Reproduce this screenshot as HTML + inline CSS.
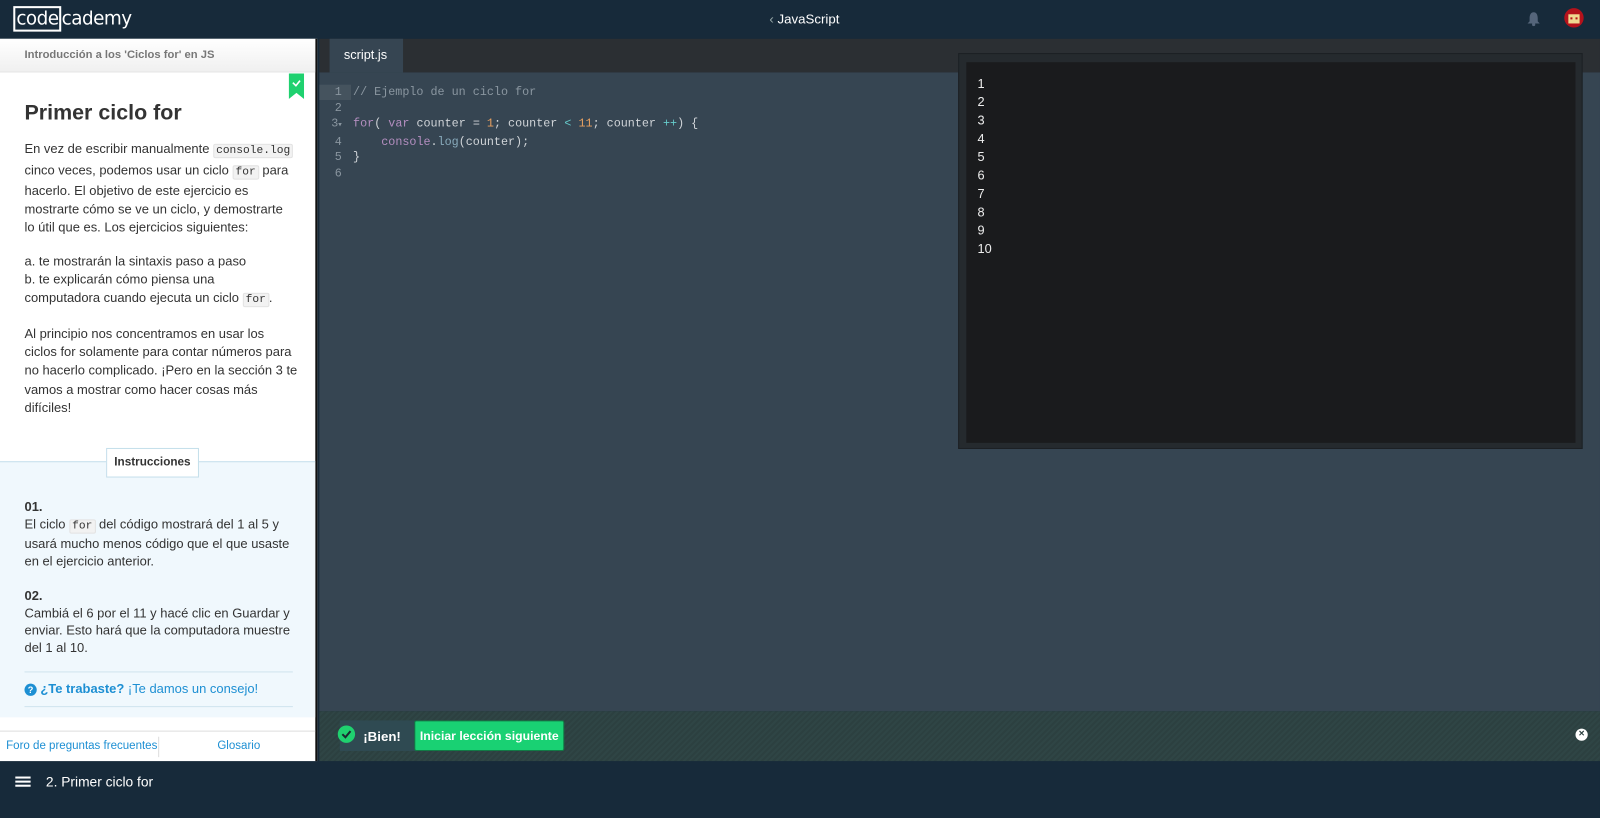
<!DOCTYPE html>
<html><head><meta charset="utf-8"><style>
*{margin:0;padding:0;box-sizing:border-box}
body{width:1600px;height:802px;overflow:hidden;background:#172a3a;font-family:"Liberation Sans","DejaVu Sans",sans-serif;position:relative}
#w{position:absolute;left:0;top:0;width:1568px;height:786px;transform:scale(1.0204);transform-origin:0 0}
.top{position:absolute;left:0;top:0;width:1568px;height:38px;background:#172a3a}
.logo{position:absolute;left:13px;top:8px;color:#fff;font-size:18px;font-family:"DejaVu Sans",sans-serif;letter-spacing:-0.5px}
.logo span.b{border:2px solid #fff;padding:0 1px}
.ttl{position:absolute;left:754px;top:11px;color:#fff;font-size:13px}
.left{position:absolute;left:0;top:38px;width:311px;height:708px;background:#fff;border-right:2px solid #111;overflow:hidden}
.lh{height:33px;background:linear-gradient(#fff,#f0f0f0);border-bottom:1px solid #e3e3e3;color:#777;font-size:11px;font-weight:bold;padding:10px 24px}
.lb{padding:0 10px 0 24px;color:#333;font-size:12.7px;line-height:18.3px;white-space:nowrap}
h1{font-size:21px;margin-top:31px;margin-bottom:17px;color:#333}
code{font-family:"Liberation Mono",monospace;font-size:11px;background:#f2f2f2;border:1px solid #e3e3e3;padding:0 2px;border-radius:2px}
p{margin-bottom:14px}
.ins{position:absolute;left:0;top:414px;width:309px;height:251px;background:#f0f8fd;border-top:1px solid #c5dfeb;padding:36px 22px 0 24px;font-size:12.7px;line-height:17px;color:#333}
.insb{position:absolute;left:104px;top:-14px;background:#fff;border:1px solid #c5dfeb;font-size:11.5px;font-weight:bold;padding:5px 7px;color:#333}
.foot{position:absolute;left:0;top:678px;width:309px;height:30px;border-top:1px solid #ddd;font-size:11.3px;color:#1d8fd3}
.tabbar{position:absolute;left:313px;top:38px;width:1255px;height:33px;background:#2b2f33}
.tab{position:absolute;left:10px;top:0;width:72px;height:33px;background:#364552;color:#fff;font-size:12.5px;padding:9px 0 0 14px}
.ed{position:absolute;left:313px;top:71px;width:1255px;height:626px;background:#364552}
.code{position:absolute;left:0;top:12px;font-family:"Liberation Mono",monospace;font-size:11.5px;line-height:15.5px;color:#d0d4d8;white-space:pre}
.ln{display:inline-block;width:33px;text-align:right;padding-right:11px;color:#8a96a0}
.out{position:absolute;left:939px;top:52px;width:612px;height:388px;background:#252a2e;border:1px solid #1c2024}
.outi{position:absolute;left:7px;top:8px;width:597px;height:373px;background:#1a1b1d;color:#eee;font-size:12.5px;line-height:18px;padding:12px 11px}
.fb{position:absolute;left:313px;top:697px;width:1255px;height:49px;background:repeating-linear-gradient(135deg,#2c4040 0 2px,#2f4545 2px 4px)}
.bot{position:absolute;left:0;top:746px;width:1568px;height:56px;background:#172a3a}
</style></head><body><div id="w">
<div class="top">
<div class="logo"><span class="b">code</span>cademy</div>
<div class="ttl"><span style="color:#9aa">‹</span> JavaScript</div>
<svg style="position:absolute;left:1496px;top:11px" width="14" height="15" viewBox="0 0 14 15"><path d="M7 1C4 1 3 4 3 7v3L1 12h12l-2-2V7c0-3-1-6-4-6z" fill="#55657a"/><circle cx="7" cy="13" r="1.6" fill="#55657a"/></svg>
<div style="position:absolute;left:1533px;top:8px;width:19px;height:19px;border-radius:50%;background:#b5121b;overflow:hidden"><div style="position:absolute;left:4px;top:6px;width:11px;height:9px;background:#f0d890"></div><div style="position:absolute;left:6px;top:9px;width:2px;height:2px;background:#b5121b"></div><div style="position:absolute;left:11px;top:9px;width:2px;height:2px;background:#b5121b"></div></div>
</div>
<div class="left">
<div class="lh">Introducción a los 'Ciclos for' en JS</div>
<svg style="position:absolute;left:283px;top:34px" width="15" height="25"><path d="M0 0h15v25l-7.5-6L0 25z" fill="#1fd16f"/><path d="M4 9l3 3 4-5" stroke="#fff" stroke-width="1.6" fill="none"/></svg>
<div class="lb">
<h1>Primer ciclo for</h1>
<p>En vez de escribir manualmente <code>console.log</code><br>cinco veces, podemos usar un ciclo <code>for</code> para<br>hacerlo. El objetivo de este ejercicio es<br>mostrarte cómo se ve un ciclo, y demostrarte<br>lo útil que es. Los ejercicios siguientes:</p>
<p>a. te mostrarán la sintaxis paso a paso<br>b. te explicarán cómo piensa una<br>computadora cuando ejecuta un ciclo <code>for</code>.</p>
<p>Al principio nos concentramos en usar los<br>ciclos for solamente para contar números para<br>no hacerlo complicado. ¡Pero en la sección 3 te<br>vamos a mostrar como hacer cosas más<br>difíciles!</p>
</div>
<div class="ins"><div class="insb">Instrucciones</div>
<div style="white-space:nowrap"><b>01.</b><br>El ciclo <code>for</code> del código mostrará del 1 al 5 y<br>usará mucho menos código que el que usaste<br>en el ejercicio anterior.<br><br>
<b>02.</b><br>Cambiá el 6 por el 11 y hacé clic en Guardar y<br>enviar. Esto hará que la computadora muestre<br>del 1 al 10.</div>
<div style="border-top:1px solid #cfe3ee;border-bottom:1px solid #cfe3ee;margin-top:14px;padding:8px 0;color:#1d8fd3"><span style="display:inline-block;width:12px;height:12px;border-radius:50%;background:#1d8fd3;color:#fff;font-size:9px;text-align:center;line-height:12px;font-weight:bold">?</span> <b>¿Te trabaste?</b> ¡Te damos un consejo!</div>
</div>
<div class="foot"><span style="position:absolute;left:6px;top:8px">Foro de preguntas frecuentes</span><span style="position:absolute;left:155px;top:5px;height:20px;border-left:1px solid #ddd"></span><span style="position:absolute;left:213px;top:8px">Glosario</span></div>
</div>
<div class="tabbar"><div class="tab">script.js</div></div>
<div class="ed"><div style="position:absolute;left:0;top:12px;width:31px;height:15px;background:#45535e"></div><div class="code"><div><span class="ln">1</span><span style="color:#8a96a0">// Ejemplo de un ciclo for</span></div><div><span class="ln">2</span></div><div><span class="ln">3<span style="font-size:7px">▾</span></span><span style="color:#b48ec0">for</span>( <span style="color:#b48ec0">var</span> counter = <span style="color:#e8a060">1</span>; counter <span style="color:#6cc">&lt;</span> <span style="color:#e8a060">11</span>; counter <span style="color:#6cc">++</span>) {</div><div><span class="ln">4</span>    <span style="color:#b48ec0">console</span>.<span style="color:#8ab">log</span>(counter);</div><div><span class="ln">5</span>}</div><div><span class="ln">6</span></div></div></div>
<div class="out"><div class="outi">1<br>2<br>3<br>4<br>5<br>6<br>7<br>8<br>9<br>10</div></div>
<div class="fb">
<div style="position:absolute;left:20px;top:9px;width:74px;height:30px;background:#2f4a52"></div>
<div style="position:absolute;left:18px;top:14px;width:17px;height:17px;border-radius:50%;background:#1fd16f"><svg width="17" height="17"><path d="M4.5 8.5l3 3 5-6" stroke="#1a2a30" stroke-width="2" fill="none"/></svg></div>
<div style="position:absolute;left:43px;top:17px;color:#fff;font-weight:bold;font-size:13px">¡Bien!</div>
<div style="position:absolute;left:93px;top:9px;width:147px;height:30px;background:#19d173;border:1px solid #117a45;border-radius:2px;color:#fff;font-weight:bold;font-size:12px;text-align:center;line-height:28px;white-space:nowrap">Iniciar lección siguiente</div>
<div style="position:absolute;left:1231px;top:17px;width:12px;height:12px;border-radius:50%;background:#fff;color:#2c4040;font-size:10px;line-height:12px;text-align:center;font-weight:bold">×</div>
</div>
<div class="bot">
<div style="position:absolute;left:15px;top:15px;width:15px;height:2px;background:#fff;box-shadow:0 4px 0 #fff,0 8px 0 #fff"></div>
<div style="position:absolute;left:45px;top:13px;color:#fff;font-size:13.5px">2. Primer ciclo for</div>
</div>
</div></body></html>
